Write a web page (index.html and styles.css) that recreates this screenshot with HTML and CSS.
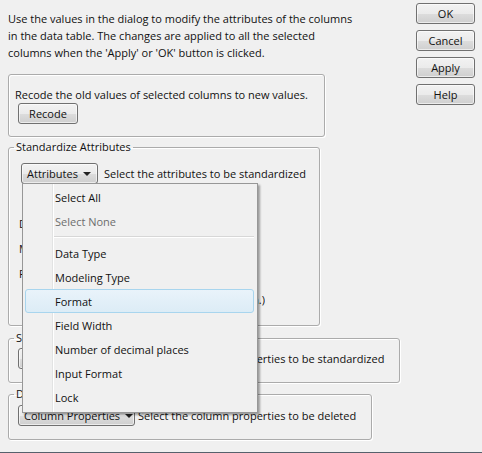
FILE: index.html
```html
<!DOCTYPE html>
<html>
<head>
<meta charset="utf-8">
<link rel="stylesheet" href="styles.css">
</head>
<body>
<div class="dialog">
  <div class="content">
    <p class="desc">Use the values in the dialog to modify the attributes of the columns<br>in the data table. The changes are applied to all the selected<br>columns when the 'Apply' or 'OK' button is clicked.</p>

    <div class="group recode">
      <div class="line">Recode the old values of selected columns to new values.</div>
      <button class="btn recode-btn">Recode</button>
    </div>

    <fieldset class="group std">
      <legend>Standardize Attributes</legend>
      <div class="inner std-inner">
        <div class="row"><button class="btn dd attr-btn">Attributes <span class="caret"></span></button><span class="hint">Select the attributes to be standardized</span></div>
        <div class="lbls">
          <div class="lbl">Data Type</div>
          <div class="lbl">Modeling Type</div>
          <div class="lbl">Format</div>
        </div>
        <div class="note"><span>(Select one or more attributes above to standardize them.)</span></div>
      </div>
    </fieldset>

    <fieldset class="group cp1">
      <legend>Standardize Column Properties</legend>
      <div class="inner cp-inner">
        <div class="row"><button class="btn dd cp-btn">Column Properties <span class="caret"></span></button><span class="hint">Select the column properties to be standardized</span></div>
      </div>
    </fieldset>

    <fieldset class="group cp2">
      <legend>Delete Column Properties</legend>
      <div class="inner cp-inner">
        <div class="row"><button class="btn dd cp-btn">Column Properties <span class="caret"></span></button><span class="hint">Select the column properties to be deleted</span></div>
      </div>
    </fieldset>
  </div>

  <div class="side">
    <button class="btn side-btn">OK</button>
    <button class="btn side-btn">Cancel</button>
    <button class="btn side-btn">Apply</button>
    <button class="btn side-btn">Help</button>
  </div>

  <div class="menu">
    <div class="item">Select All</div>
    <div class="item disabled">Select None</div>
    <div class="sep"></div>
    <div class="item">Data Type</div>
    <div class="item">Modeling Type</div>
    <div class="item hot">Format</div>
    <div class="item">Field Width</div>
    <div class="item">Number of decimal places</div>
    <div class="item">Input Format</div>
    <div class="item">Lock</div>
  </div>
</div>
</body>
</html>
```
FILE: styles.css
```css
* { box-sizing: border-box; }
html, body { margin: 0; padding: 0; }
body {
  background: #f0f0f0;
  font-family: "Open Sans", "Noto Sans", sans-serif;
  font-size: 11px;
  color: #111;
}
.dialog {
  position: relative;
  width: 482px;
  height: 453px;
  border-bottom: 1px solid #56616c;
  display: flex;
  overflow: hidden;
}
.content {
  width: 400px;
  margin-left: 8px;
}
.desc {
  margin: 10px 0 0 0;
  line-height: 17px;
}
.group {
  border: 1px solid #ababab;
  border-radius: 3px;
  box-shadow: inset 1px 1px 0 #fff, 1px 1px 0 #fff;
  margin: 0;
  padding: 0;
  min-width: 0;
}
legend {
  margin-left: 5px;
  padding: 0 2px;
  line-height: 16px;
}
.recode {
  margin-top: 13px;
  width: 317px;
  height: 63px;
  padding: 11px 0 0 6px;
}
.line { line-height: 17px; }
.btn {
  font: inherit;
  color: #111;
  height: 21px;
  padding: 0 6px;
  border: 1px solid #707070;
  border-radius: 3px;
  background: linear-gradient(#f2f2f2 0%, #ebebeb 50%, #dddddd 51%, #cfcfcf 100%);
  box-shadow: inset 0 0 0 1px rgba(255,255,255,0.6);
  line-height: 17px;
  white-space: nowrap;
}
.recode-btn {
  margin: 0 0 0 3px;
  width: 60px;
  display: block;
}
.std {
  margin-top: 2px;
  width: 312px;
  height: 187px;
}
.std-inner { padding: 8px 0 0 12px; }
.row {
  display: flex;
  align-items: center;
  gap: 6px;
  white-space: nowrap;
}
.attr-btn { width: 77px; text-align: left; padding-left: 5px; }
.caret {
  display: inline-block;
  width: 0; height: 0;
  border-left: 4px solid transparent;
  border-right: 4px solid transparent;
  border-top: 4px solid #222;
  vertical-align: 2px;
  margin-left: 2px;
}
.lbls {
  margin-top: 27px;
  margin-left: -2px;
}
.lbl {
  line-height: 25px;
  height: 25px;
}
.note {
  display: flex;
  justify-content: flex-end;
  width: 241px;
  margin-left: 3px;
  overflow: hidden;
  white-space: nowrap;
  line-height: 24px;
  margin-top: 2px;
}
.cp1 {
  margin-top: 4px;
  width: 392px;
  height: 53px;
}
.cp2 {
  margin-top: 3px;
  width: 364px;
  height: 54px;
}
.cp-inner { padding: 2px 0 0 9px; }
.cp2 .cp-inner { padding-top: 3px; }
.cp-btn { width: 117px; padding-left: 5px; text-align: left; }
.cp-inner .row { gap: 3px; }
.side {
  margin-left: 8px;
  padding-top: 3px;
  display: flex;
  flex-direction: column;
  gap: 6px;
}
.side-btn { width: 59px; padding: 0; text-align: center; }

.menu {
  position: absolute;
  left: 22px;
  top: 183px;
  width: 236px;
  height: 230px;
  background: #f0f0f0 linear-gradient(90deg, transparent 29px, #e2e3e3 29px, #e2e3e3 30px, #fff 30px, #fff 31px, transparent 31px);
  border: 1px solid #979797;
  padding: 1px 3px 2px 2px;
  box-shadow: 2px 2px 2px rgba(0,0,0,0.35);
}
.item {
  height: 24px;
  line-height: 24px;
  padding-left: 29px;
  border: 1px solid transparent;
  border-radius: 3px;
  white-space: nowrap;
}
.item.disabled { color: #6d6d6d; }
.item.hot {
  background: linear-gradient(#e9f3fa, #dcecf6);
  border-color: #a8d5ee;
}
.sep {
  height: 8px;
  margin-left: 29px;
  background: linear-gradient(transparent 3px, #d7d7d7 3px, #d7d7d7 4px, #fff 4px, #fff 5px, transparent 5px);
}
```
